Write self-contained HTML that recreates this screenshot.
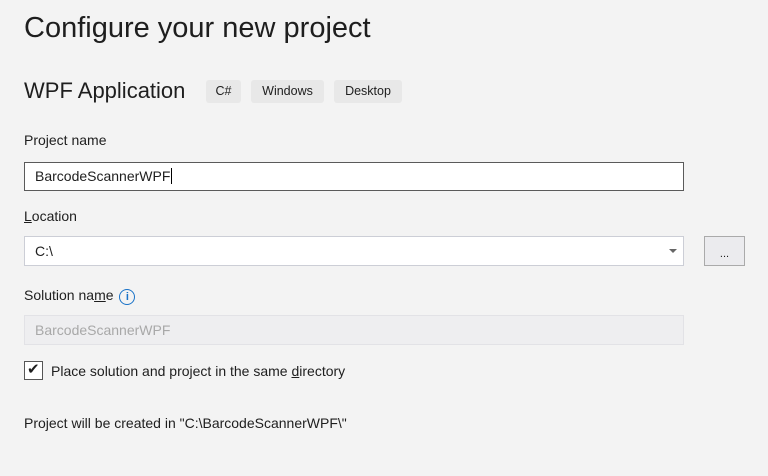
<!DOCTYPE html>
<html><head><style>
body{margin:0;width:768px;height:476px;background:#f3f3f3;font-family:"Liberation Sans",sans-serif;color:#1e1e1e;position:relative;overflow:hidden}
.a{position:absolute;white-space:nowrap}
.box{position:absolute;box-sizing:border-box;background:#fff}
.tag{position:absolute;top:80px;height:23px;background:#e8e8e8;border-radius:3px;font-size:12.5px;line-height:23px;text-align:center}
u{text-decoration:underline}
</style></head><body>
<div class="a" style="left:24px;top:12px;font-size:29px;">Configure your new project</div>
<div class="a" style="left:24px;top:78px;font-size:22px;">WPF Application</div>
<div class="tag" style="left:206px;width:35px">C#</div>
<div class="tag" style="left:251px;width:73px">Windows</div>
<div class="tag" style="left:334px;width:68px">Desktop</div>
<div class="a" style="left:24px;top:132px;font-size:14px;">Project name</div>
<div class="box" style="left:24px;top:162px;width:660px;height:29px;border:1px solid #5a5a5a;font-size:14px;line-height:27px;padding-left:10px">BarcodeScannerWPF<span style="border-left:1px solid #000;margin-left:1px"></span></div>
<div class="a" style="left:24px;top:208px;font-size:14px;"><u>L</u>ocation</div>
<div class="box" style="left:24px;top:236px;width:660px;height:30px;border:1px solid #ccced6;font-size:14px;line-height:28px;padding-left:10px">C:\<span style="position:absolute;right:6px;top:12px;border-left:4px solid transparent;border-right:4px solid transparent;border-top:4px solid #666"></span></div>
<div class="box" style="left:704px;top:236px;width:41px;height:30px;border:1px solid #aaa;background:#ebebee;font-size:11px;text-align:center;line-height:34px">...</div>
<div class="a" style="left:24px;top:287px;font-size:14px;">Solution na<u>m</u>e <span style="display:inline-block;width:14px;height:14px;border:1.5px solid #1a73c8;border-radius:50%;color:#1a73c8;font-size:11px;line-height:14px;text-align:center;font-weight:bold;vertical-align:0px;margin-left:2px">i</span></div>
<div class="box" style="left:24px;top:315px;width:660px;height:30px;border:1px solid #e2e2e6;background:#eeeef0;color:#a8a8a8;font-size:14px;line-height:28px;padding-left:10px">BarcodeScannerWPF</div>
<div class="box" style="left:24px;top:361px;width:19px;height:19px;border:1px solid #555"><span style="position:absolute;left:2px;top:-2px;font-size:15px;">✔</span></div>
<div class="a" style="left:51px;top:363px;font-size:14px;">Place solution and project in the same <u>d</u>irectory</div>
<div class="a" style="left:24px;top:415px;font-size:14px;">Project will be created in "C:\BarcodeScannerWPF\"</div>
</body></html>
